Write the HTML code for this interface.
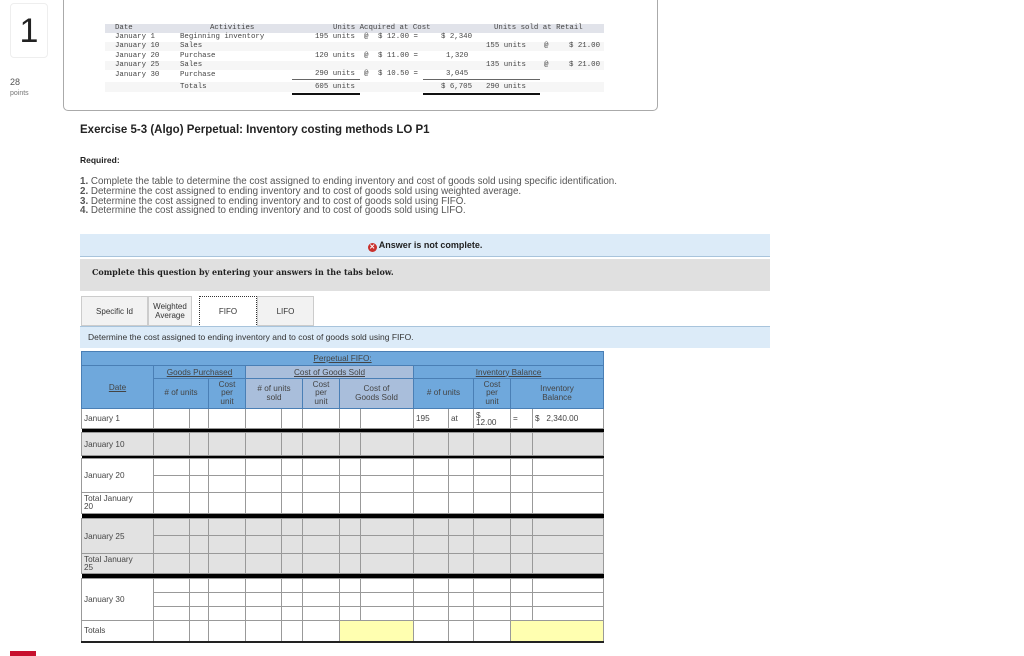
<!DOCTYPE html>
<html><head><meta charset="utf-8">
<style>
*{margin:0;padding:0;box-sizing:border-box}
body{width:1024px;height:656px;background:#fff;position:relative;overflow:hidden;font-family:"Liberation Sans",sans-serif;color:#333}
.abs{position:absolute}
.m{position:absolute;font-family:"Liberation Mono",monospace;font-size:7.4px;color:#444;white-space:pre;line-height:8px}
table.t{position:absolute;left:81px;top:351px;width:522px;border-collapse:collapse;table-layout:fixed;font-size:8.2px;color:#444}
table.t td{border:1px solid #999;padding:0 2px;overflow:hidden;vertical-align:middle}
.h{background:#6fa8dc;text-align:center;border-color:#4a7fb5 !important}
.hc{background:#a9bedb;text-align:center;border-color:#4a7fb5 !important}
.u{text-decoration:underline}
.bar td{background:#000;padding:0;border:0 !important}
.g td{background:#e2e2e2}
.y{background:#ffffb0 !important}
.hdr td{line-height:8.5px}
</style></head><body>

<div class="abs" style="left:10px;top:3px;width:38px;height:55px;border:1px solid #eee;border-radius:4px;font-size:34px;text-align:center;line-height:55px;color:#222">1</div>
<div class="abs" style="left:10px;top:77px;font-size:9px;color:#555;line-height:10px">28<br><span style="font-size:7px;color:#777">points</span></div>

<div class="abs" style="left:63px;top:-5px;width:595px;height:116px;border:1px solid #aaa;border-radius:5px"></div>
<div class="abs" style="left:105px;top:24px;width:499px;height:9px;background:#e1e3ea"></div>
<div class="abs" style="left:105px;top:42px;width:499px;height:9px;background:#f6f6f6"></div>
<div class="abs" style="left:105px;top:61px;width:499px;height:9px;background:#f6f6f6"></div>
<div class="abs" style="left:105px;top:82px;width:499px;height:10px;background:#f6f6f6"></div>

<div class="m" style="left:115px;top:24px">Date</div>
<div class="m" style="left:210px;top:24px">Activities</div>
<div class="m" style="left:333px;top:24px">Units Acquired at Cost</div>
<div class="m" style="left:494px;top:24px">Units sold at Retail</div>

<div class="m" style="left:115px;top:33px;line-height:9.4px">January 1
January 10
January 20
January 25
January 30</div>
<div class="m" style="left:180px;top:33px;line-height:9.4px">Beginning inventory
Sales
Purchase
Sales
Purchase</div>
<div class="m" style="left:180px;top:83px">Totals</div>

<div class="m" style="left:315px;top:33px">195 units</div>
<div class="m" style="left:364px;top:33px">@</div>
<div class="m" style="left:378px;top:33px">$ 12.00 =</div>
<div class="m" style="left:441px;top:33px">$ 2,340</div>
<div class="m" style="left:486px;top:42px">155 units</div>
<div class="m" style="left:544px;top:42px">@</div>
<div class="m" style="left:569px;top:42px">$ 21.00</div>
<div class="m" style="left:315px;top:52px">120 units</div>
<div class="m" style="left:364px;top:52px">@</div>
<div class="m" style="left:378px;top:52px">$ 11.00 =</div>
<div class="m" style="left:446px;top:52px">1,320</div>
<div class="m" style="left:486px;top:61px">135 units</div>
<div class="m" style="left:544px;top:61px">@</div>
<div class="m" style="left:569px;top:61px">$ 21.00</div>
<div class="m" style="left:315px;top:70px">290 units</div>
<div class="m" style="left:364px;top:70px">@</div>
<div class="m" style="left:378px;top:70px">$ 10.50 =</div>
<div class="m" style="left:446px;top:70px">3,045</div>
<div class="m" style="left:315px;top:83px">605 units</div>
<div class="m" style="left:441px;top:83px">$ 6,705</div>
<div class="m" style="left:486px;top:83px">290 units</div>

<div class="abs" style="left:292px;top:79px;width:68px;border-top:1px solid #666"></div>
<div class="abs" style="left:423px;top:79px;width:117px;border-top:1px solid #666"></div>
<div class="abs" style="left:292px;top:93px;width:68px;border-top:2px solid #111"></div>
<div class="abs" style="left:423px;top:93px;width:117px;border-top:2px solid #111"></div>

<div class="abs" style="left:80px;top:124px;font-size:11.5px;font-weight:bold;color:#222">Exercise 5-3 (Algo) Perpetual: Inventory costing methods LO P1</div>
<div class="abs" style="left:80px;top:155px;font-size:8.5px;font-weight:bold;color:#222">Required:</div>
<div class="abs" style="left:80px;top:177px;font-size:9.8px;line-height:9.8px;color:#555;white-space:nowrap">
<b>1.</b> Complete the table to determine the cost assigned to ending inventory and cost of goods sold using specific identification.<br>
<b>2.</b> Determine the cost assigned to ending inventory and to cost of goods sold using weighted average.<br>
<b>3.</b> Determine the cost assigned to ending inventory and to cost of goods sold using FIFO.<br>
<b>4.</b> Determine the cost assigned to ending inventory and to cost of goods sold using LIFO.</div>

<div class="abs" style="left:80px;top:234px;width:690px;height:23px;background:#dcebf8;border-bottom:1px solid #a8c4dc;font-size:9px;font-weight:bold;text-align:center;line-height:22px;color:#222"><span style="display:inline-block;width:9px;height:9px;border-radius:50%;background:#c9302c;color:#fff;font-size:7px;line-height:9px;vertical-align:-1px">✕</span> Answer is not complete.</div>
<div class="abs" style="left:80px;top:259px;width:690px;height:32px;background:#e0e0e0;font-size:8px;font-weight:bold;line-height:26px;padding-left:12px;color:#222;font-family:'DejaVu Serif','Liberation Serif',serif">Complete this question by entering your answers in the tabs below.</div>

<div class="abs" style="left:81px;top:296px;width:67px;height:30px;background:#f2f2f2;border:1px solid #ccc;font-size:8px;text-align:center;line-height:29px">Specific Id</div>
<div class="abs" style="left:148px;top:296px;width:44px;height:30px;background:#f2f2f2;border:1px solid #ccc;font-size:8px;text-align:center;line-height:9px;padding-top:5px">Weighted<br>Average</div>
<div class="abs" style="left:199px;top:296px;width:58px;height:31px;background:#fff;border:1px dotted #333;font-size:8px;text-align:center;line-height:29px">FIFO</div>
<div class="abs" style="left:257px;top:296px;width:57px;height:30px;background:#f2f2f2;border:1px solid #ccc;font-size:8px;text-align:center;line-height:29px">LIFO</div>
<div class="abs" style="left:80px;top:326px;width:690px;height:22px;background:#dcebf8;border-top:1px solid #a8c4dc;font-size:8.5px;line-height:21px;padding-left:8px;color:#333">Determine the cost assigned to ending inventory and to cost of goods sold using FIFO.</div>

<table class="t">
<colgroup><col style="width:72px"><col style="width:36px"><col style="width:19px"><col style="width:37px"><col style="width:36px"><col style="width:21px"><col style="width:37px"><col style="width:21px"><col style="width:53px"><col style="width:35px"><col style="width:25px"><col style="width:37px"><col style="width:22px"><col style="width:71px"></colgroup>
<tr style="height:14px"><td colspan="14" class="h"><span class="u">Perpetual FIFO:</span></td></tr>
<tr style="height:13px"><td rowspan="2" class="h"><span class="u">Date</span></td><td colspan="3" class="h"><span class="u">Goods Purchased</span></td><td colspan="5" class="hc"><span class="u">Cost of Goods Sold</span></td><td colspan="5" class="h"><span class="u">Inventory Balance</span></td></tr>
<tr class="hdr" style="height:30px"><td colspan="2" class="h"># of units</td><td class="h" style="padding:0 8px">Cost per unit</td><td colspan="2" class="hc" style="padding:0 6px"># of units sold</td><td class="hc" style="padding:0 8px">Cost per unit</td><td colspan="2" class="hc" style="padding:0 12px">Cost of Goods Sold</td><td colspan="2" class="h"># of units</td><td class="h" style="padding:0 8px">Cost per unit</td><td colspan="2" class="h" style="padding:0 18px">Inventory Balance</td></tr>
<tr style="height:20px"><td>January 1</td><td></td><td></td><td></td><td></td><td></td><td></td><td></td><td></td><td>195</td><td>at</td><td style="line-height:7px">$<br>12.00</td><td>=</td><td>$ &nbsp; 2,340.00</td></tr>
<tr class="bar" style="height:4px"><td colspan="14"></td></tr>
<tr class="g" style="height:23px"><td>January 10</td><td></td><td></td><td></td><td></td><td></td><td></td><td></td><td></td><td></td><td></td><td></td><td></td><td></td></tr>
<tr class="bar" style="height:3px"><td colspan="14"></td></tr>
<tr style="height:17px"><td rowspan="2">January 20</td><td></td><td></td><td></td><td></td><td></td><td></td><td></td><td></td><td></td><td></td><td></td><td></td><td></td></tr>
<tr style="height:17px"><td></td><td></td><td></td><td></td><td></td><td></td><td></td><td></td><td></td><td></td><td></td><td></td><td></td></tr>
<tr style="height:21px;line-height:8px"><td style="padding-right:20px">Total January 20</td><td></td><td></td><td></td><td></td><td></td><td></td><td></td><td></td><td></td><td></td><td></td><td></td><td></td></tr>
<tr class="bar" style="height:5px"><td colspan="14"></td></tr>
<tr class="g" style="height:17px"><td rowspan="2">January 25</td><td></td><td></td><td></td><td></td><td></td><td></td><td></td><td></td><td></td><td></td><td></td><td></td><td></td></tr>
<tr class="g" style="height:18px"><td></td><td></td><td></td><td></td><td></td><td></td><td></td><td></td><td></td><td></td><td></td><td></td><td></td></tr>
<tr class="g" style="height:20px;line-height:8px"><td style="padding-right:20px">Total January 25</td><td></td><td></td><td></td><td></td><td></td><td></td><td></td><td></td><td></td><td></td><td></td><td></td><td></td></tr>
<tr class="bar" style="height:5px"><td colspan="14"></td></tr>
<tr style="height:14px"><td rowspan="3">January 30</td><td></td><td></td><td></td><td></td><td></td><td></td><td></td><td></td><td></td><td></td><td></td><td></td><td></td></tr>
<tr style="height:14px"><td></td><td></td><td></td><td></td><td></td><td></td><td></td><td></td><td></td><td></td><td></td><td></td><td></td></tr>
<tr style="height:14px"><td></td><td></td><td></td><td></td><td></td><td></td><td></td><td></td><td></td><td></td><td></td><td></td><td></td></tr>
<tr style="height:21px;border-bottom:2px solid #222"><td>Totals</td><td></td><td></td><td></td><td></td><td></td><td></td><td colspan="2" class="y"></td><td></td><td></td><td></td><td colspan="2" class="y"></td></tr>
</table>

<div class="abs" style="left:10px;top:651px;width:26px;height:5px;background:#c8102e"></div>
</body></html>
